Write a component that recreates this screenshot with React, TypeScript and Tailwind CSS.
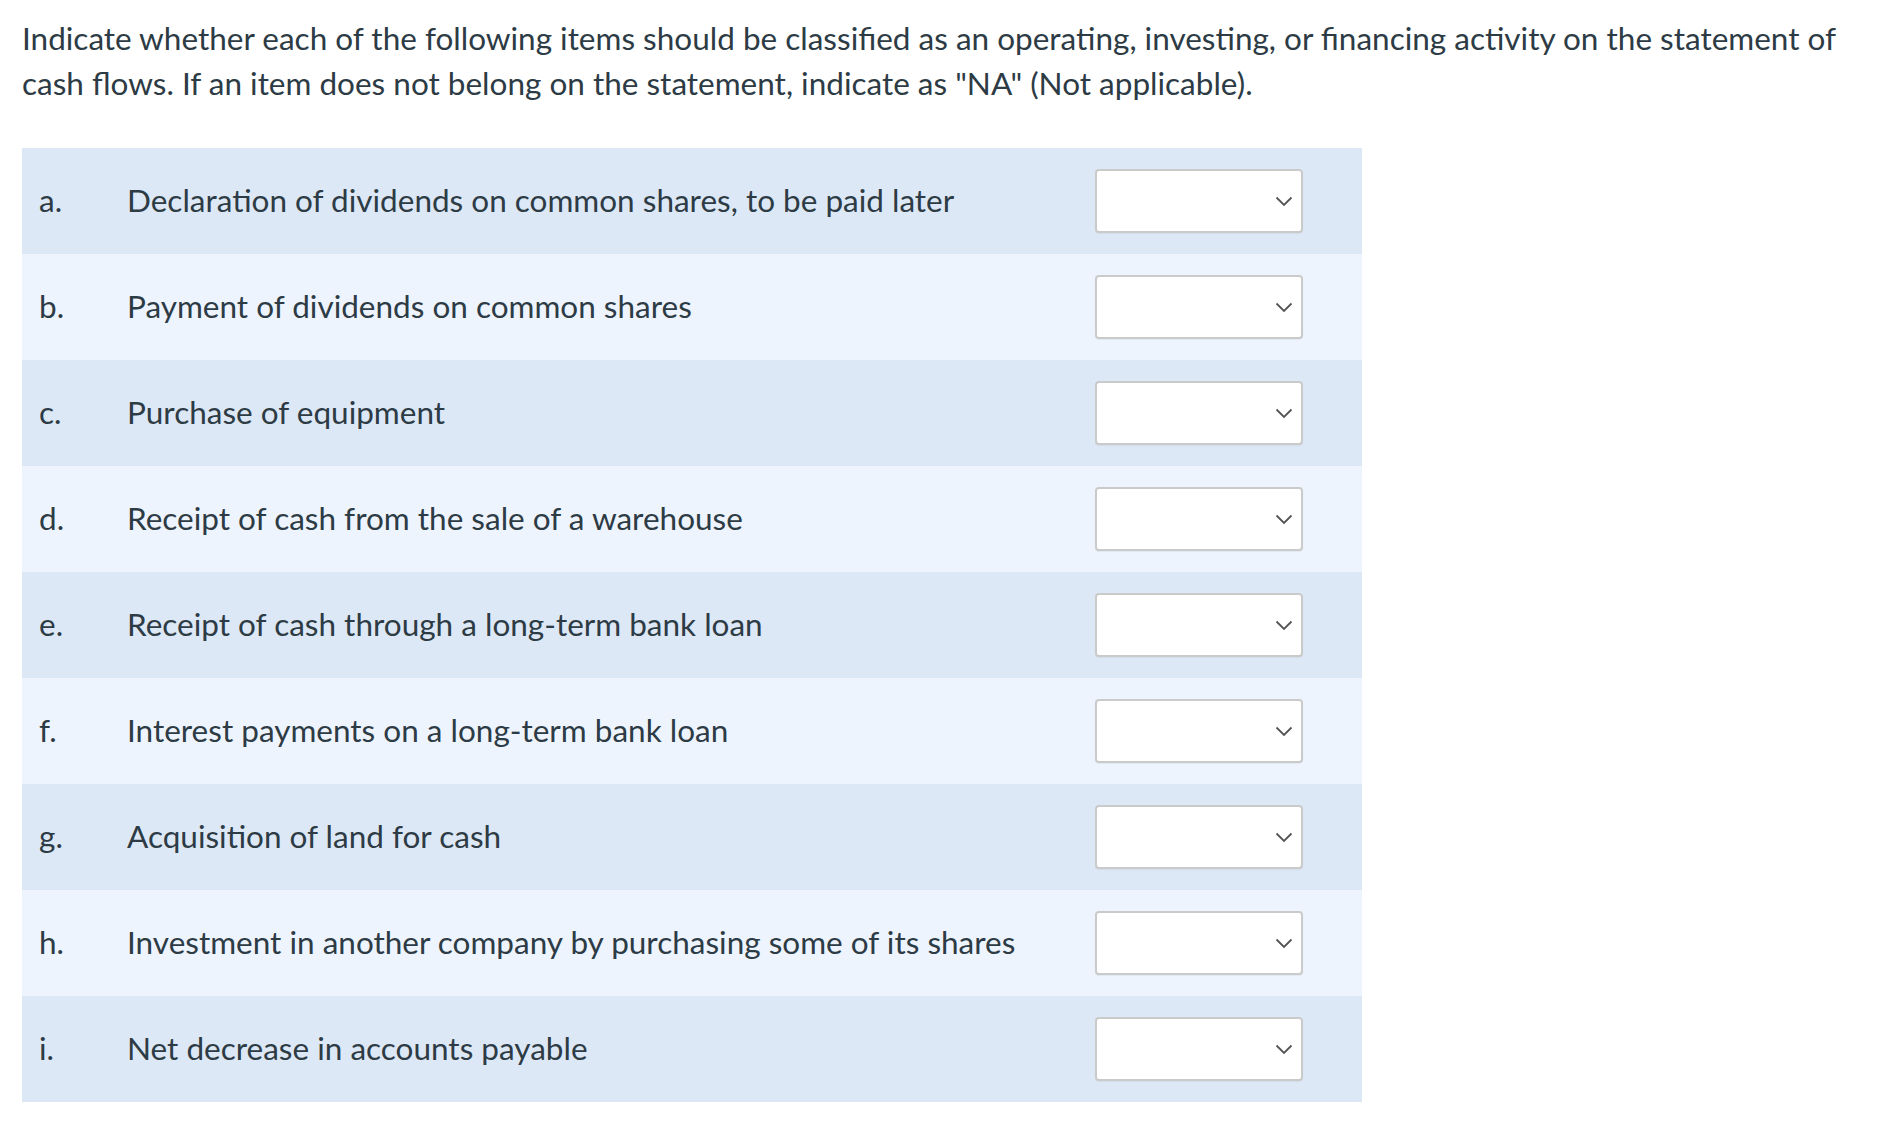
import React from "react";

interface Item {
  letter: string
  text: string
}

const items: Item[] = [
  { letter: "a.", text: "Declaration of dividends on common shares, to be paid later" },
  { letter: "b.", text: "Payment of dividends on common shares" },
  { letter: "c.", text: "Purchase of equipment" },
  { letter: "d.", text: "Receipt of cash from the sale of a warehouse" },
  { letter: "e.", text: "Receipt of cash through a long-term bank loan" },
  { letter: "f.", text: "Interest payments on a long-term bank loan" },
  { letter: "g.", text: "Acquisition of land for cash" },
  { letter: "h.", text: "Investment in another company by purchasing some of its shares" },
  { letter: "i.", text: "Net decrease in accounts payable" },
]

const Dropdown: React.FC = () => {
  return (
    <div className="relative w-[208px] h-[64px] bg-white border-2 border-[#cacaca] rounded-[4px] shadow-[0_1px_1px_rgba(0,0,0,0.05)]">
      <svg
        className="absolute right-[8px] top-[25px]"
        width="18"
        height="11"
        viewBox="0 0 18 11"
        fill="none"
      >
        <path d="M1.5 1.5 L9 9 L16.5 1.5" stroke="#555" strokeWidth="1.8" />
      </svg>
    </div>
  )
}

const App: React.FC = () => {
  return (
    <div className="w-[1898px] h-[1148px] bg-white text-[#2d3b45] font-['Lato','Liberation_Sans',sans-serif]">
      <div className="px-[22px] pt-[16px]">
        <p className="text-[31.5px] leading-[45px] w-[1850px]">
          Indicate whether each of the following items should be classified as an operating, investing, or financing activity on the statement of cash flows. If an item does not belong on the statement, indicate as "NA" (Not applicable).
        </p>
        <div className="mt-[42px] w-[1340px]">
          {items.map((item, i) => (
            <div
              key={item.letter}
              className={`flex items-center h-[106px] pl-[17px] ${i % 2 === 0 ? "bg-[#dde8f6]" : "bg-[#edf4fe]"}`}
            >
              <span className="w-[88px] text-[31.5px]">{item.letter}</span>
              <span className="flex-1 text-[31.5px]">{item.text}</span>
              <div className="w-[267px]">
                <Dropdown />
              </div>
            </div>
          ))}
        </div>
      </div>
    </div>
  )
}

export default App;
